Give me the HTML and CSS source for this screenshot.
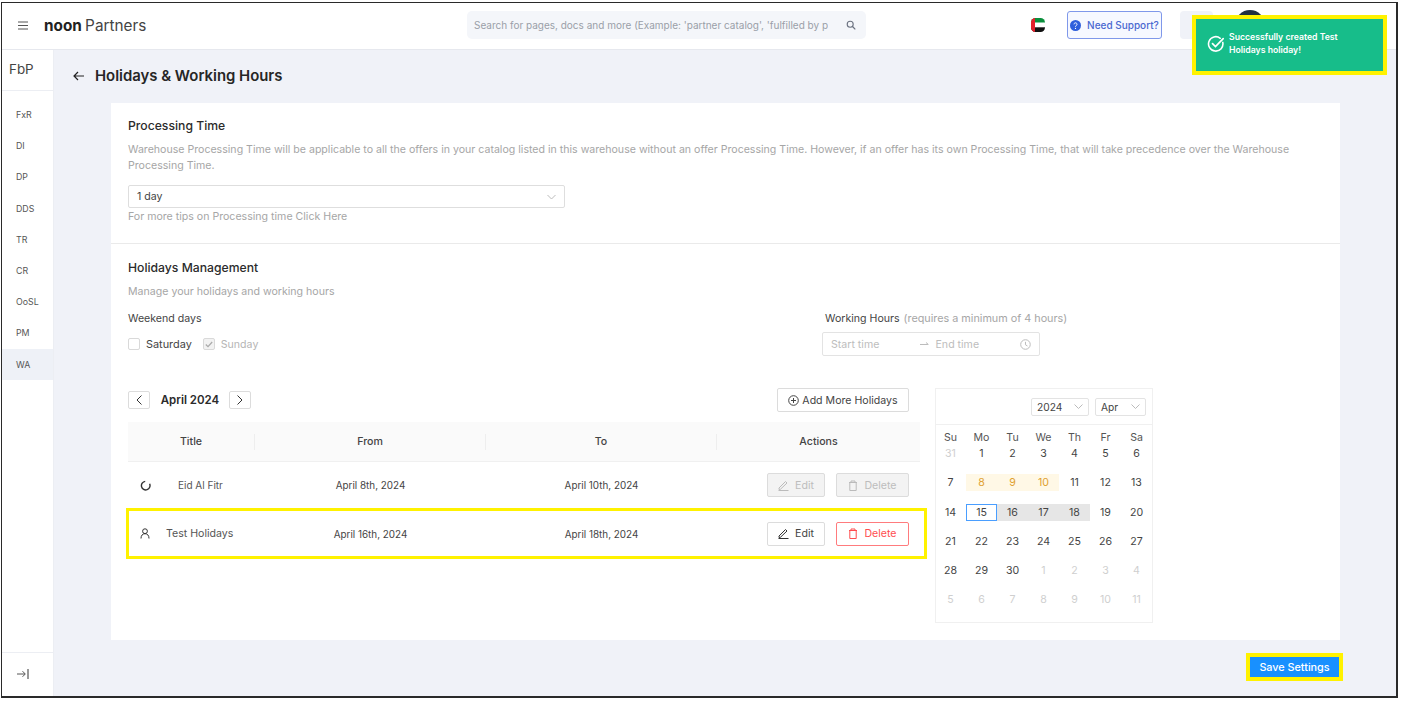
FILE: index.html
```html
<!DOCTYPE html>
<html lang="en">
<head>
<meta charset="utf-8">
<title>Holidays &amp; Working Hours</title>
<link rel="stylesheet" href="styles.css">
</head>
<body>
<div class="frame">
  <header class="topbar">
    <svg class="ico-menu" width="10" height="9" viewBox="0 0 10 9"><path d="M0 1h10M0 4.500h10M0 8h10" stroke="#555" stroke-width="1"/></svg>
    <div class="brand"><b>noon</b> Partners</div>
    <div class="search">
      <span class="search-text">Search for pages, docs and more (Example: 'partner catalog', 'fulfilled by p</span>
      <svg width="10" height="10" viewBox="0 0 10 10"><circle cx="4.200" cy="4.200" r="3" fill="none" stroke="#6b7280" stroke-width="1.100"/><path d="M6.500 6.500 9.300 9.300" stroke="#6b7280" stroke-width="1.200"/></svg>
    </div>
    <svg class="flag" width="14" height="14" viewBox="0 0 14 14"><defs><clipPath id="fc"><rect width="14" height="14" rx="4.500"/></clipPath></defs><g clip-path="url(#fc)"><rect width="14" height="4.700" fill="#0a8f3c"/><rect y="4.700" width="14" height="4.600" fill="#fff"/><rect y="9.300" width="14" height="4.700" fill="#111"/><rect width="4" height="14" fill="#e3202b"/></g></svg>
    <button class="support">
      <svg width="11" height="11" viewBox="0 0 11 11"><circle cx="5.500" cy="5.500" r="5.500" fill="#2f5fdc"/><path d="M4 4.300a1.500 1.500 0 1 1 2.300 1.300c-.5.3-.8.5-.8 1.100" fill="none" stroke="#fff" stroke-width="1"/><circle cx="5.500" cy="8.400" r=".6" fill="#fff"/></svg>
      Need Support?
    </button>
    <div class="pin-box"></div>
    <div class="avatar">M</div>
    <div class="user"><div>Masoudallah</div><div>partners@noon.com</div></div>
  </header>

  <div class="toast">
    <div class="toast-inner">
      <svg width="18" height="18" viewBox="0 0 17 17"><path d="M14.900 7a6.800 6.800 0 1 1-2.400-3.900" fill="none" stroke="#fff" stroke-width="1.500" stroke-linecap="round"/><path d="M5.200 8.200 8 11l7.300-7.600" fill="none" stroke="#fff" stroke-width="1.600" stroke-linecap="round"/></svg>
      <span>Successfully created Test Holidays holiday!</span>
    </div>
  </div>

  <div class="shell">
    <aside class="side">
      <div class="side-top">FbP</div>
      <nav class="side-nav">
        <a>FxR</a><a>DI</a><a>DP</a><a>DDS</a><a>TR</a><a>CR</a><a>OoSL</a><a>PM</a><a class="active">WA</a>
      </nav>
      <div class="side-foot">
        <svg width="12" height="10" viewBox="0 0 12 10"><path d="M0 5h8M5.500 2.200 8.300 5 5.500 7.800" fill="none" stroke="#555" stroke-width="1"/><path d="M11 0v10" stroke="#555" stroke-width="1.200"/></svg>
      </div>
    </aside>

    <main class="main">
      <div class="page-title">
        <svg width="11" height="10" viewBox="0 0 11 10"><path d="M11 5H1M5 1 1 5l4 4" fill="none" stroke="#222" stroke-width="1.200"/></svg>
        <h1>Holidays &amp; Working Hours</h1>
      </div>

      <div class="card">
        <section class="sec-processing">
          <h2>Processing Time</h2>
          <p class="muted para">Warehouse Processing Time will be applicable to all the offers in your catalog listed in this warehouse without an offer Processing Time. However, if an offer has its own Processing Time, that will take precedence over the Warehouse Processing Time.</p>
          <div class="select-day">
            <span>1 day</span>
            <svg width="9" height="6" viewBox="0 0 9 6"><path d="M.5 1 4.500 5 8.500 1" fill="none" stroke="#bbb"/></svg>
          </div>
          <p class="muted tip">For more tips on Processing time Click Here</p>
        </section>

        <section class="sec-holidays">
          <h2>Holidays Management</h2>
          <p class="muted manage">Manage your holidays and working hours</p>
          <div class="settings-row">
            <div class="weekend">
              <div class="label">Weekend days</div>
              <div class="checks">
                <span class="box"></span><span class="check-text sat">Saturday</span>
                <span class="box checked"><svg width="8" height="7" viewBox="0 0 8 7"><path d="M.8 3.500 3 5.700 7.200 1" fill="none" stroke="#aaa" stroke-width="1.200"/></svg></span><span class="check-text off">Sunday</span>
              </div>
            </div>
            <div class="hours">
              <div class="label hours-label">Working Hours <span class="muted req">(requires a minimum of 4 hours)</span></div>
              <div class="time-range">
                <span class="time t1">Start time</span>
                <svg width="9" height="6" viewBox="0 0 9 6"><path d="M0 3.500h8M6 1.500 8.500 3.500" fill="none" stroke="#bbb"/></svg>
                <span class="time t2">End time</span>
                <svg width="11" height="11" viewBox="0 0 11 11"><circle cx="5.500" cy="5.500" r="4.800" fill="none" stroke="#bbb"/><path d="M5.500 2.800v3l2 1.200" fill="none" stroke="#bbb"/></svg>
              </div>
            </div>
          </div>

          <div class="lower">
            <div class="left">
              <div class="month-bar">
                <button class="nav-btn"><svg width="6" height="10" viewBox="0 0 6 10"><path d="M5.500.5 1 5l4.500 4.500" fill="none" stroke="#333"/></svg></button>
                <span class="month">April 2024</span>
                <button class="nav-btn"><svg width="6" height="10" viewBox="0 0 6 10"><path d="M.5.5 5 5 .5 9.500" fill="none" stroke="#333"/></svg></button>
                <button class="add-btn"><svg width="11" height="11" viewBox="0 0 11 11"><circle cx="5.500" cy="5.500" r="4.800" fill="none" stroke="#444"/><path d="M5.500 3v5M3 5.500h5" stroke="#444"/></svg>Add More Holidays</button>
              </div>
              <div class="table">
                <div class="row head">
                  <div class="c c1">Title</div><div class="c c2">From</div><div class="c c3">To</div><div class="c c4">Actions</div>
                </div>
                <div class="row r1">
                  <div class="c1 title-cell"><svg class="ticon" width="11" height="11" viewBox="0 0 11 11"><path d="M3.800 1.700A4.300 4.300 0 1 0 8.800 2.500" fill="none" stroke="#333" stroke-width="1.400" transform="rotate(20 5.500 5.500)"/></svg><span class="name n1">Eid Al Fitr</span></div>
                  <div class="c2 date">April 8th, 2024</div>
                  <div class="c3 date">April 10th, 2024</div>
                  <div class="c4 acts">
                    <button class="act dis"><svg width="11" height="11" viewBox="0 0 11 11"><path d="M1 8 7.500 1.500l1.500 1.500L2.500 9.200 1 9.500zM.5 10.500h10" fill="none" stroke="#bbb"/></svg>Edit</button>
                    <button class="act dis del-dis"><svg width="10" height="11" viewBox="0 0 10 11"><path d="M1 2.500h8M3 2.500V1h4v1.500M1.800 2.500v8h6.400v-8" fill="none" stroke="#bbb"/></svg>Delete</button>
                  </div>
                </div>
                <div class="row r2">
                  <div class="c1 title-cell"><svg class="ticon" width="10" height="11" viewBox="0 0 10 11"><circle cx="5" cy="3.200" r="2.400" fill="none" stroke="#333"/><path d="M1 10.500c0-3 1.500-4.800 4-4.800s4 1.800 4 4.800" fill="none" stroke="#333"/></svg><span class="name">Test Holidays</span></div>
                  <div class="c2 date">April 16th, 2024</div>
                  <div class="c3 date">April 18th, 2024</div>
                  <div class="c4 acts">
                    <button class="act"><svg width="11" height="11" viewBox="0 0 11 11"><path d="M1 8 7.500 1.500l1.500 1.500L2.500 9.200 1 9.500zM.5 10.500h10" fill="none" stroke="#333"/></svg>Edit</button>
                    <button class="act danger"><svg width="10" height="11" viewBox="0 0 10 11"><path d="M1 2.500h8M3 2.500V1h4v1.500M1.800 2.500v8h6.400v-8" fill="none" stroke="#ff4d4f"/></svg>Delete</button>
                  </div>
                </div>
              </div>
            </div>

            <div class="calendar">
              <div class="cal-head">
                <div class="cal-sel y"><span>2024</span><svg width="9" height="5" viewBox="0 0 9 5"><path d="M.5.500 4.500 4.500 8.500.5" fill="none" stroke="#bbb"/></svg></div>
                <div class="cal-sel m"><span>Apr</span><svg width="9" height="5" viewBox="0 0 9 5"><path d="M.5.500 4.500 4.500 8.500.5" fill="none" stroke="#bbb"/></svg></div>
              </div>
              <div class="weekdays"><span>Su</span><span>Mo</span><span>Tu</span><span>We</span><span>Th</span><span>Fr</span><span>Sa</span></div>
              <div class="dates">
                <span class="o">31</span><span>1</span><span>2</span><span>3</span><span>4</span><span>5</span><span>6</span>
                <span>7</span><span class="h">8</span><span class="h">9</span><span class="h">10</span><span>11</span><span>12</span><span>13</span>
                <span>14</span><span class="today">15</span><span class="s">16</span><span class="s">17</span><span class="s">18</span><span>19</span><span>20</span>
                <span>21</span><span>22</span><span>23</span><span>24</span><span>25</span><span>26</span><span>27</span>
                <span>28</span><span>29</span><span>30</span><span class="o">1</span><span class="o">2</span><span class="o">3</span><span class="o">4</span>
                <span class="o">5</span><span class="o">6</span><span class="o">7</span><span class="o">8</span><span class="o">9</span><span class="o">10</span><span class="o">11</span>
              </div>
            </div>
          </div>
        </section>
      </div>

      <div class="footer-bar">
        <button class="save">Save Settings</button>
      </div>
    </main>
  </div>
</div>
</body>
</html>
```

FILE: styles.css
```css
* { box-sizing: border-box; }
html, body { margin: 0; padding: 0; background: #fff; }
body { font-family: Inter, "Open Sans", sans-serif; font-size: 10.6px; color: #404040; overflow: hidden; }
h1, h2, p { margin: 0; font-weight: 500; }
button { font: inherit; cursor: pointer; }

.frame {
  position: relative;
  width: 1397px;
  height: 696px;
  margin: 2px 0 0 1px;
  border: 1px solid #2a2a2a;
  border-width: 1px 2px 2px 1px;
  display: flex;
  flex-direction: column;
  background: #f0f2f8;
}

.topbar {
  height: 47px;
  flex: none;
  display: flex;
  align-items: center;
  padding-bottom: 2px;
  background: #fff;
  border-bottom: 1px solid #e6e8ee;
  position: relative;
}
.ico-menu { margin-left: 16px; }
.brand { margin-left: 16px; font-size: 15.3px; color: #444; width: 423px; word-spacing: -1px; }
.brand b { font-weight: 700; color: #222; }
.search {
  width: 399px;
  height: 28px;
  border-radius: 5px;
  background: #f4f6fa;
  display: flex;
  align-items: center;
  justify-content: space-between;
  padding: 0 10px 0 7px;
}
.search-text { color: #9a9fa8; font-size: 10px; white-space: nowrap; overflow: hidden; }
.flag { margin-left: 165px; }
.support {
  margin-left: 22px;
  width: 95px;
  height: 28px;
  border: 1px solid #7f98ea;
  border-radius: 3px;
  background: #f6f8ff;
  color: #4a68d0;
  font-size: 10px;
  font-weight: 500;
  display: flex;
  align-items: center;
  justify-content: center;
  gap: 6px;
  padding: 0;
  white-space: nowrap;
}
.pin-box { margin-left: 18px; width: 33px; height: 28px; border-radius: 4px; background: #f0f2f8; }
.avatar {
  margin-left: 22px;
  width: 30px;
  height: 30px;
  border-radius: 50%;
  background: #223040;
  color: #fff;
  display: flex;
  align-items: center;
  justify-content: center;
  font-size: 12px;
}
.user { margin-left: 8px; font-size: 9px; line-height: 12px; color: #555; }

.toast {
  position: absolute;
  left: 1190px;
  top: 12px;
  width: 195px;
  height: 60px;
  border: 4px solid #fff200;
  z-index: 5;
}
.toast-inner {
  height: 100%;
  background: #17bd8a;
  display: flex;
  align-items: center;
  gap: 4px;
  padding: 0 12px 2px 11px;
  color: #fff;
  font-size: 8.7px;
  font-weight: 600;
  line-height: 13px;
}
.toast-inner svg { flex: none; }

.shell { flex: 1; display: flex; min-height: 0; }
.side {
  width: 52px;
  flex: none;
  background: #fff;
  border-right: 1px solid #eceef3;
  display: flex;
  flex-direction: column;
}
.side-top {
  height: 41px;
  border-bottom: 1px solid #eceef3;
  font-size: 13.4px;
  color: #444;
  padding: 11px 0 0 7px;
}
.side-nav { flex: 1; display: flex; flex-direction: column; padding-top: 8px; }
.side-nav a { height: 31.2px; line-height: 32px; padding-left: 14px; font-size: 8.8px; color: #555; }
.side-nav a.active { background: #eef1f7; }
.side-foot { height: 44px; border-top: 1px solid #eceef3; display: flex; align-items: center; padding: 0 0 2px 15px; }

.main { flex: 1; display: flex; flex-direction: column; min-width: 0; }
.page-title { height: 53px; display: flex; align-items: center; gap: 11px; padding: 0 0 2px 19px; flex: none; }
.page-title h1 { font-size: 14.9px; font-weight: 600; color: #262626; }

.card { width: 1229px; height: 537px; margin-left: 57px; background: #fff; flex: none; display: flex; flex-direction: column; }
.sec-processing { height: 141px; border-bottom: 1px solid #eaeaea; padding: 14px 17px 0; flex: none; }
h2 { font-size: 12.2px; font-weight: 500; color: #2b2b2b; line-height: 17px; }
.muted { color: #a6a6a6; font-weight: 400; }
.para { margin-top: 8px; line-height: 16px; font-size: 10.6px; width: 1190px; }
.select-day {
  width: 437px;
  height: 23px;
  margin-top: 11px;
  border: 1px solid #dedede;
  border-radius: 2px;
  display: flex;
  align-items: center;
  justify-content: space-between;
  padding: 0 8px;
  color: #444;
}
.tip { line-height: 15px; margin-top: 1px; }

.sec-holidays { flex: 1; padding: 15px 17px 0; }
.manage { margin-top: 8px; line-height: 16px; }
.settings-row { display: flex; margin-top: 11px; height: 76px; }
.weekend { width: 694px; }
.label { line-height: 16px; color: #444; }
.checks { display: flex; align-items: center; margin-top: 10px; height: 14px; }
.box { width: 12px; height: 12px; border: 1px solid #d9d9d9; border-radius: 2px; display: flex; align-items: center; justify-content: center; }
.box.checked { background: #f2f2f2; margin-left: 11px; }
.check-text { margin-left: 6px; color: #444; }
.check-text.sat { font-size: 10.9px; }
.check-text.off { color: #b5b5b5; }
.hours-label { padding-left: 3px; }
.req { margin-left: 1px; font-size: 10.8px; }
.time-range {
  width: 218px;
  height: 24px;
  margin-top: 5px;
  border: 1px solid #e3e3e3;
  border-radius: 2px;
  display: flex;
  align-items: center;
  padding: 0 8px;
  color: #bdbdbd;
}
.t1 { width: 89px; }
.t2 { margin-left: 7px; width: 85px; }

.lower { display: flex; gap: 15px; margin-top: 1px; }
.left { width: 792px; }
.month-bar { display: flex; align-items: center; height: 24px; }
.nav-btn { width: 22px; height: 18px; border: 1px solid #dcdcdc; border-radius: 2px; background: #fff; padding: 0; display: flex; align-items: center; justify-content: center; }
.month { width: 79px; text-align: center; font-size: 11.5px; font-weight: 600; color: #2b2b2b; padding-left: 1px; }
.add-btn {
  margin-left: auto;
  margin-right: 11px;
  width: 132px;
  height: 24px;
  border: 1px solid #dcdcdc;
  border-radius: 2px;
  background: #fff;
  color: #444;
  display: flex;
  align-items: center;
  justify-content: center;
  gap: 3px;
  padding: 0;
  white-space: nowrap;
}
.table { margin-top: 10px; position: relative; }
.row { display: grid; grid-template-columns: 127px 231px 231px 203px; align-items: center; }
.head { height: 40px; background: #fafafa; border-bottom: 1px solid #f0f0f0; }
.c { text-align: center; font-weight: 500; color: #444; height: 16px; line-height: 16px; }
.c1, .c2, .c3 { position: relative; }
.head .c1, .head .c2, .head .c3 { border-right: 1px solid #eeeeee; }
.r1 { height: 46px; }
.r2 { height: 51px; position: relative; width: 801px; margin-left: -2px; grid-template-columns: 129px 231px 231px 210px; }
.r2::after { content: ""; position: absolute; inset: 0; border: 3.5px solid #fff200; pointer-events: none; }
.title-cell { display: flex; align-items: center; }
.ticon { margin-left: 12px; flex: none; }
.r2 .ticon { margin-left: 14px; }
.name { color: #555; }
.name.n1 { margin-left: 27px; font-size: 10px; }
.r2 .name { margin-left: 16px; }
.date { text-align: center; color: #444; font-size: 9.9px; }
.acts { display: flex; justify-content: flex-end; gap: 11px; padding-right: 11px; }
.r2 .acts { padding-right: 18px; }
.act {
  width: 58px;
  height: 24px;
  border: 1px solid #dcdcdc;
  border-radius: 2px;
  background: #fff;
  color: #444;
  display: flex;
  align-items: center;
  justify-content: center;
  gap: 6px;
  padding: 0;
}
.act.danger, .del-dis { width: 73px; }
.act.danger { border-color: #ff7b7d; color: #ff4d4f; }
.act.dis { background: #f3f3f3; color: #bdbdbd; }

.calendar { width: 218px; height: 235px; border: 1px solid #f0f0f0; }
.cal-head { height: 36px; border-bottom: 1px solid #f0f0f0; display: flex; justify-content: flex-end; align-items: center; gap: 6px; padding: 0 6px 0 0; }
.cal-sel { height: 18px; border: 1px solid #e3e3e3; border-radius: 2px; display: flex; align-items: center; justify-content: space-between; padding: 0 5px; color: #444; font-size: 10.2px; }
.cal-sel.y { width: 58px; }
.cal-sel.m { width: 51px; }
.weekdays, .dates { display: grid; grid-template-columns: repeat(7, 31px); margin-left: -1px; }
.weekdays { height: 16px; margin-top: 5px; margin-bottom: -1px; line-height: 16px; text-align: center; color: #555; }
.dates { row-gap: 12.3px; grid-auto-rows: 17px; text-align: center; color: #444; line-height: 17px; }
.o { color: #cfcfcf; }
.h { background: #fff8e6; color: #e0a030; }
.today { border: 1px solid #4a9eff; line-height: 15px; }
.s { background: #e6e6e6; }

.footer-bar { flex: 1; display: flex; justify-content: flex-end; padding: 13px 53px 0 0; align-items: flex-start; }
.save {
  width: 97px;
  height: 28px;
  background: #1890ff;
  border: 4px solid #fff200;
  color: #fff;
  font-size: 10.8px;
  font-weight: 500;
  padding: 0;
}
```
